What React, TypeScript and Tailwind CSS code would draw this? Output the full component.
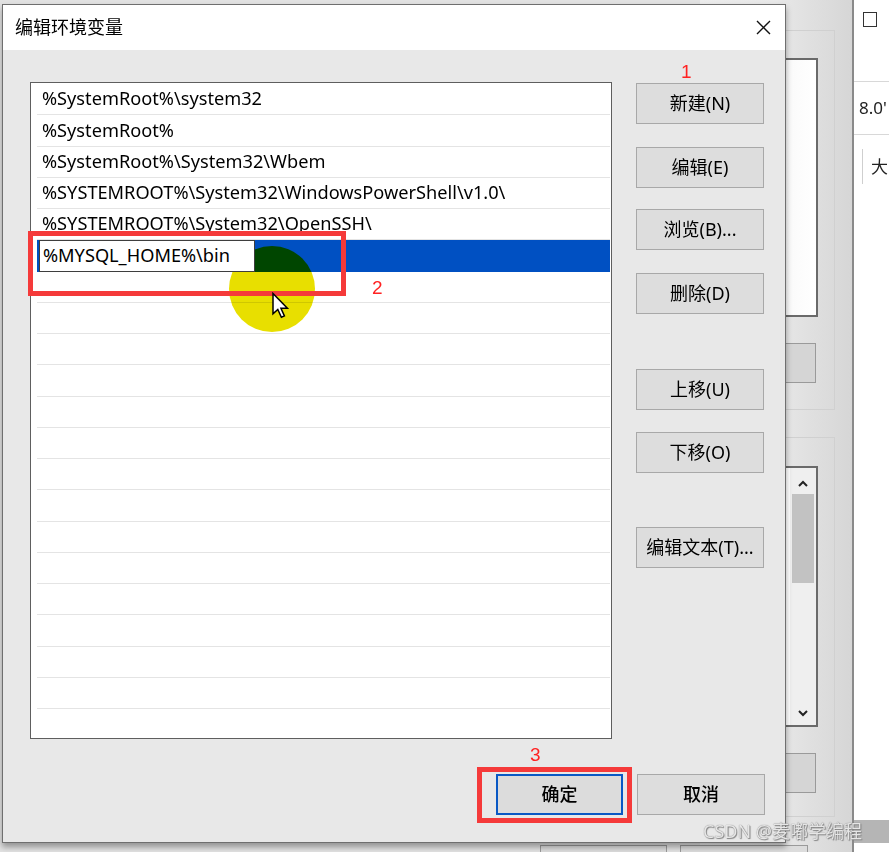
import React from "react";

const rows = [
  "%SystemRoot%\\system32",
  "%SystemRoot%",
  "%SystemRoot%\\System32\\Wbem",
  "%SYSTEMROOT%\\System32\\WindowsPowerShell\\v1.0\\",
  "%SYSTEMROOT%\\System32\\OpenSSH\\",
];

const FONT = "font-['Noto_Sans','Noto_Sans_CJK_SC',sans-serif]";

function Btn({ label, className = "" }: { label: string; className?: string }) {
  return (
    <div
      className={`h-[41px] w-[128px] flex items-center justify-center bg-[#dddddd] border border-[#a8a8a8] text-[18px] text-black ${className}`}
    >
      {label}
    </div>
  );
}

function ScrollList() {
  return (
    <div className="w-[57px] h-[261px] bg-white border-2 border-[#6a6a6a] flex">
      <div className="flex-1" />
      <div className="w-[26px] flex flex-col items-center bg-[#efefef]">
        <svg width="12" height="12" viewBox="0 0 12 12" className="mt-[10px]">
          <path d="M2 8 L6 4 L10 8" fill="none" stroke="#222" strokeWidth="2" />
        </svg>
        <div className="mt-[4px] w-[22px] h-[89px] bg-[#c2c2c2]" />
        <div className="flex-1" />
        <svg width="12" height="12" viewBox="0 0 12 12" className="mb-[6px]">
          <path d="M2 4 L6 8 L10 4" fill="none" stroke="#222" strokeWidth="2" />
        </svg>
      </div>
    </div>
  );
}

export default function App() {
  const empty = Array.from({ length: 16 });
  return (
    <div className={`relative w-[889px] h-[852px] overflow-hidden bg-[#e2e2e2] ${FONT}`}>
      {/* background window A (behind dialog, right) */}
      <div className="absolute left-[700px] top-0 w-[154px] h-[852px] bg-gradient-to-r from-[#ececec] via-[#e8e8e8] to-[#d6d6d6] border-r-2 border-[#8a8a8a] flex flex-col pt-[30px]">
        <div className="w-[135px] h-[380px] border border-[#d0d0d0] flex flex-col pl-[60px] pt-[27px]">
          <div className="w-[57px] h-[259px] bg-gradient-to-r from-[#f6f6f6] to-white border-2 border-[#6a6a6a]" />
          <div className="mt-[26px] w-[55px] h-[40px] bg-[#d5d5d5] border border-[#9a9a9a]" />
        </div>
        <div className="mt-[27px] w-[135px] h-[380px] border border-[#d0d0d0] flex flex-col pl-[60px] pt-[28px]">
          <ScrollList />
          <div className="mt-[26px] w-[55px] h-[40px] bg-[#d5d5d5] border border-[#9a9a9a]" />
        </div>
      </div>

      {/* background window B (far right) */}
      <div className="absolute left-[854px] top-0 w-[35px] h-[852px] bg-white flex flex-col">
        <div className="ml-[9px] mt-[12px] w-[14px] h-[15px] border border-[#333]" />
        <div className="mt-[54px] h-[54px] border-y border-[#d8d8d8] flex items-center pl-[5px] text-[17px] text-[#222]">
          8.0'
        </div>
        <div className="mt-[14px] flex items-center h-[35px]">
          <div className="ml-[8px] w-px h-[35px] bg-[#cfcfcf]" />
          <span className="ml-[8px] text-[17px] text-[#222]">大</span>
        </div>
        <div className="flex-1" />
        <div className="h-[23px] bg-[#b5b5b5] mb-[9px]" />
      </div>

      {/* bottom strip buttons below dialog */}
      <div className="absolute left-[540px] top-[845px] flex gap-[13px]">
        <div className="w-[127px] h-[10px] border border-[#9a9a9a] bg-[#dcdcdc]" />
        <div className="w-[128px] h-[10px] border border-[#9a9a9a] bg-[#dcdcdc]" />
      </div>

      {/* dialog */}
      <div className="absolute left-[2px] top-[4px] w-[784px] h-[839px] border border-[#6f6f6f] bg-[#e8e8e8] shadow-[0_4px_6px_rgba(0,0,0,0.35)] flex flex-col">
        {/* title bar */}
        <div className="h-[45px] bg-white flex items-center justify-between pl-[12px] pr-[14px] shrink-0">
          <span className="text-[18px] text-black">编辑环境变量</span>
          <svg width="15" height="15" viewBox="0 0 15 15">
            <path d="M1 1 L14 14 M14 1 L1 14" stroke="#111" strokeWidth="1.4" />
          </svg>
        </div>

        {/* body */}
        <div className="flex-1 flex flex-col pl-[27px] pr-[20px] pt-[32px]">
          <div className="flex">
            {/* list */}
            <div className="relative w-[582px] h-[657px] bg-white border border-[#5e5e5e] overflow-hidden pt-[1px] flex flex-col">
              <div className="absolute left-[198px] top-[163px] w-[86px] h-[86px] rounded-full bg-[#e8df00] mix-blend-multiply" />
              {rows.map((r) => (
                <div
                  key={r}
                  className="ml-[6px] mr-px h-[31.25px] shrink-0 border-b border-[#e4e4e4] flex items-center pl-[5px] text-[18.2px] text-black whitespace-nowrap"
                >
                  {r}
                </div>
              ))}
              <div className="ml-[6px] mr-px h-[31.25px] shrink-0 bg-[#0050c2] flex items-stretch">
                <div className="relative z-10 ml-[2px] w-[216px] bg-white border border-[#3e3e3e] flex items-center pl-[3px] text-[18.2px] text-black whitespace-nowrap">
                  %MYSQL_HOME%\bin
                </div>
              </div>
              {empty.map((_, i) => (
                <div
                  key={i}
                  className="ml-[6px] mr-px h-[31.25px] shrink-0 border-b border-[#e4e4e4]"
                />
              ))}
            </div>

            {/* buttons */}
            <div className="ml-[24px] flex flex-col pt-[1px]">
              <Btn label="新建(N)" />
              <Btn label="编辑(E)" className="mt-[23px]" />
              <Btn label="浏览(B)..." className="mt-[21px]" />
              <Btn label="删除(D)" className="mt-[23px]" />
              <Btn label="上移(U)" className="mt-[55px]" />
              <Btn label="下移(O)" className="mt-[22px]" />
              <Btn label="编辑文本(T)..." className="mt-[54px]" />
            </div>
          </div>

          {/* bottom buttons */}
          <div className="mt-[35px] flex justify-end gap-[14px]">
            <div className="h-[41px] w-[127px] flex items-center justify-center bg-[#dcdcdc] border-2 border-[#0a58c4] text-[18px] font-medium text-black">
              确定
            </div>
            <div className="h-[41px] w-[128px] flex items-center justify-center bg-[#dddddd] border border-[#a8a8a8] text-[18px] font-medium text-black">
              取消
            </div>
          </div>
        </div>
      </div>

      {/* annotations */}
      <div className="absolute left-[28px] top-[231px] w-[318px] h-[65px] border-[5px] border-[#f53a3a]" />
      <div className="absolute left-[477px] top-[767px] w-[155px] h-[56px] border-[5px] border-[#f53a3a]" />
      <div className="absolute left-[681px] top-[62px] text-[19px] leading-none text-[#f22] font-['Liberation_Sans',sans-serif]">1</div>
      <div className="absolute left-[372px] top-[278px] text-[19px] leading-none text-[#f22] font-['Liberation_Sans',sans-serif]">2</div>
      <div className="absolute left-[530px] top-[745px] text-[19px] leading-none text-[#f22] font-['Liberation_Sans',sans-serif]">3</div>

      {/* cursor */}
      <svg className="absolute left-[271px] top-[292px]" width="19" height="27" viewBox="0 0 12 18">
        <path
          d="M1 1 L1 14.5 L4.2 11.6 L6.6 16.8 L8.6 15.9 L6.3 10.8 L10.6 10.8 Z"
          fill="#fff"
          stroke="#000"
          strokeWidth="1"
          strokeLinejoin="miter"
        />
      </svg>

      {/* watermark */}
      <div className="absolute left-[703px] top-[822px] text-[18px] leading-none text-[#e6e6e6] whitespace-nowrap [text-shadow:0_0_1px_#666,1px_1px_1px_#888]">
        CSDN @麦嘟学编程
      </div>
    </div>
  );
}
